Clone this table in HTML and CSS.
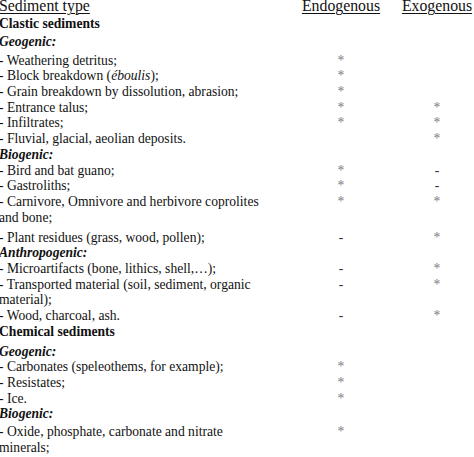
FILE: index.html
```html
<!DOCTYPE html>
<html lang="en">
<head>
<meta charset="utf-8">
<title>Sediment types</title>
<link rel="stylesheet" href="styles.css">
</head>
<body>
<div class="table">
  <div class="row head">
    <span class="name">Sediment type</span>
    <span class="mark">Endogenous</span>
    <span class="mark">Exogenous</span>
  </div>
  <div class="row cat"><span class="name">Clastic sediments</span></div>
  <div class="row sub gap-a"><span class="name">Geogenic:</span></div>
  <div class="row gap-b"><span class="name">- Weathering detritus;</span><span class="mark star">*</span><span class="mark"></span></div>
  <div class="row"><span class="name">- Block breakdown (<i>éboulis</i>);</span><span class="mark star">*</span><span class="mark"></span></div>
  <div class="row"><span class="name">- Grain breakdown by dissolution, abrasion;</span><span class="mark star">*</span><span class="mark"></span></div>
  <div class="row"><span class="name">- Entrance talus;</span><span class="mark star">*</span><span class="mark star">*</span></div>
  <div class="row"><span class="name">- Infiltrates;</span><span class="mark star">*</span><span class="mark star">*</span></div>
  <div class="row"><span class="name">- Fluvial, glacial, aeolian deposits.</span><span class="mark"></span><span class="mark star">*</span></div>
  <div class="row sub"><span class="name">Biogenic:</span></div>
  <div class="row"><span class="name">- Bird and bat guano;</span><span class="mark star">*</span><span class="mark dash">-</span></div>
  <div class="row"><span class="name">- Gastroliths;</span><span class="mark star">*</span><span class="mark dash">-</span></div>
  <div class="row"><span class="name">- Carnivore, Omnivore and herbivore coprolites and bone;</span><span class="mark star">*</span><span class="mark star">*</span></div>
  <div class="row gap-c"><span class="name">- Plant residues (grass, wood, pollen);</span><span class="mark dash">-</span><span class="mark star">*</span></div>
  <div class="row sub"><span class="name">Anthropogenic:</span></div>
  <div class="row"><span class="name">- Microartifacts (bone, lithics, shell,…);</span><span class="mark dash">-</span><span class="mark star">*</span></div>
  <div class="row"><span class="name">- Transported material (soil, sediment, organic material);</span><span class="mark dash">-</span><span class="mark star">*</span></div>
  <div class="row"><span class="name">- Wood, charcoal, ash.</span><span class="mark dash">-</span><span class="mark star">*</span></div>
  <div class="row cat"><span class="name">Chemical sediments</span></div>
  <div class="row sub gap-c"><span class="name">Geogenic:</span></div>
  <div class="row"><span class="name">- Carbonates (speleothems, for example);</span><span class="mark star">*</span><span class="mark"></span></div>
  <div class="row"><span class="name">- Resistates;</span><span class="mark star">*</span><span class="mark"></span></div>
  <div class="row"><span class="name">- Ice.</span><span class="mark star">*</span><span class="mark"></span></div>
  <div class="row sub"><span class="name">Biogenic:</span></div>
  <div class="row gap-d"><span class="name">- Oxide, phosphate, carbonate and nitrate minerals;</span><span class="mark star">*</span><span class="mark"></span></div>
</div>
</body>
</html>
```
FILE: styles.css
```css
html, body {
  margin: 0;
  padding: 0;
  background: #ffffff;
  overflow: hidden;
}

.table {
  margin-left: -1px;
  font-family: "Liberation Serif", "Times New Roman", serif;
  font-size: 13.6px;
  line-height: 15.7px;
  color: #111111;
}

.row {
  display: grid;
  grid-template-columns: 283px 118px 74px;
  align-items: start;
}

.row .name {
  padding-right: 12px;
}

.row .mark {
  text-align: center;
}

.head {
  font-size: 15.8px;
  line-height: 11.4px;
  margin-bottom: 4.2px;
}

.head span {
  text-decoration: underline;
  text-decoration-thickness: 1px;
  text-underline-offset: 2px;
  white-space: nowrap;
}

.cat .name {
  font-weight: bold;
}

.sub .name {
  font-weight: bold;
  font-style: italic;
}

.star {
  color: #7c7c7c;
}

.dash {
  color: #333333;
}

.gap-a { margin-top: 2.3px; }
.gap-b { margin-top: 3.3px; }
.gap-c { margin-top: 4.2px; }
.gap-d { margin-top: 2px; }
```
